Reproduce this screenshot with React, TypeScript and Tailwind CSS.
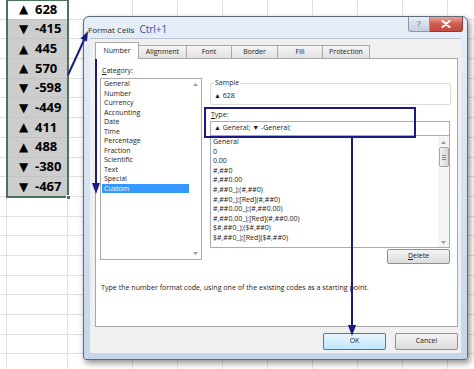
import React from 'react';

const values = [
  { up: true, v: '628' },
  { up: false, v: '-415' },
  { up: true, v: '445' },
  { up: true, v: '570' },
  { up: false, v: '-598' },
  { up: false, v: '-449' },
  { up: true, v: '411' },
  { up: true, v: '488' },
  { up: false, v: '-380' },
  { up: false, v: '-467' },
];

const cols = ['w-[7px]', 'w-[61px]', 'w-[65px]', 'w-[45px]', 'w-[45px]', 'w-[45px]', 'w-[45px]', 'w-[45px]', 'w-[45px]', 'w-[45px]', 'w-[45px]', 'w-[45px]'];

const categories = ['General', 'Number', 'Currency', 'Accounting', 'Date', 'Time', 'Percentage', 'Fraction', 'Scientific', 'Text', 'Special', 'Custom'];

const formats = [
  'General',
  '0',
  '0.00',
  '#,##0',
  '#,##0.00',
  '#,##0_);(#,##0)',
  '#,##0_);[Red](#,##0)',
  '#,##0.00_);(#,##0.00)',
  '#,##0.00_);[Red](#,##0.00)',
  '$#,##0_);($#,##0)',
  '$#,##0_);[Red]($#,##0)',
];

const tabs = [
  { label: 'Number', w: 'w-[44px]' },
  { label: 'Alignment', w: 'w-[48px]' },
  { label: 'Font', w: 'w-[45px]' },
  { label: 'Border', w: 'w-[46px]' },
  { label: 'Fill', w: 'w-[45px]' },
  { label: 'Protection', w: 'w-[47px]' },
];

const ArrowUp = () => (
  <svg width="5" height="3" viewBox="0 0 5 3">
    <polygon points="0,3 5,3 2.5,0" fill="#9a9a9a" />
  </svg>
);

const ArrowDown = () => (
  <svg width="5" height="3" viewBox="0 0 5 3">
    <polygon points="0,0 5,0 2.5,3" fill="#9a9a9a" />
  </svg>
);

const Sheet = () => (
  <div className="flex flex-col">
    {Array.from({ length: 19 }).map((_, r) => {
      const row = values[r];
      return (
        <div key={r} className="flex h-[19.7px] shrink-0">
          {cols.map((w, c) => {
            if (c === 1 && row) {
              return (
                <div
                  key={c}
                  className={`${w} shrink-0 h-full flex items-center pl-[12px] border-r border-b border-[#c4c4c4] text-[13px] font-bold text-black ${r === 0 ? 'bg-white' : 'bg-[#cdcdcd]'}`}
                >
                  <span className="inline-block w-[16px] font-['DejaVu_Sans',sans-serif] font-normal text-[12px] leading-none">
                    {row.up ? '▲' : '▼'}
                  </span>
                  <span>{row.v}</span>
                </div>
              );
            }
            return <div key={c} className={`${w} shrink-0 h-full border-r border-b border-[#e0e0e0]`} />;
          })}
        </div>
      );
    })}
  </div>
);

const Button = ({ children, def }: { children: React.ReactNode; def?: boolean }) => (
  <div
    className={`w-[63px] h-[17px] flex items-center justify-center rounded-[2px] border text-[7px] text-[#1a1a1a] bg-gradient-to-b ${
      def ? 'border-[#3c7fb1] from-[#eaf6fd] to-[#bee6fd]' : 'border-[#8e8f8f] from-[#f4f4f4] to-[#dcdcdc]'
    }`}
  >
    {children}
  </div>
);

const Dialog = () => (
  <div className="absolute left-[83px] top-[16px] w-[385px] h-[344px] rounded-t-[6px] rounded-b-[3px] border border-[#5f6b7a] bg-gradient-to-b from-[#e6eef8] to-[#c5d6ea] shadow-[2px_3px_6px_rgba(0,0,0,0.45)] flex flex-col">
    {/* title bar */}
    <div className="h-[21px] flex items-start shrink-0">
      <div className="flex items-baseline pl-[4px] pt-[5px] gap-[5px]">
        <span className="text-[8px] text-[#1e1e1e]">Format Cells</span>
        <span className="text-[10px] text-[#2b4f9e]">Ctrl+1</span>
      </div>
      <div className="ml-auto mr-[4px] flex">
        <div className="w-[22px] h-[15px] rounded-bl-[3px] border border-t-0 border-[#8a97a8] bg-gradient-to-b from-[#e9eef5] to-[#c2cfdf] flex items-center justify-center text-[9px] font-bold text-[#8b9bb0]">
          ?
        </div>
        <div className="w-[33px] h-[15px] rounded-br-[3px] border border-t-0 border-l-0 border-[#8a3a3a] bg-gradient-to-b from-[#e7a39b] via-[#cf5a4f] to-[#c44a3e] flex items-center justify-center">
          <svg width="10" height="8" viewBox="0 0 10 8">
            <path d="M1.5 1 L8.5 7 M8.5 1 L1.5 7" stroke="#ffffff" strokeWidth="2" strokeLinecap="round" />
          </svg>
        </div>
      </div>
    </div>

    {/* client area */}
    <div className="mx-[6px] w-[371px] h-[315px] bg-[#f0f0f0] border-t border-[#b8c4d2] pt-[3px] pl-[5px] flex flex-col">
      <div className="flex items-end h-[16px]">
        {tabs.map((t, i) =>
          i === 0 ? (
            <div
              key={t.label}
              className={`${t.w} h-[17px] -mb-px relative z-10 bg-white border border-b-0 border-[#a8a8a8] flex items-center justify-center text-[7px] text-[#1a1a1a]`}
            >
              {t.label}
            </div>
          ) : (
            <div
              key={t.label}
              className={`${t.w} h-[13px] bg-gradient-to-b from-[#f5f5f5] to-[#e2e2e2] border border-l-0 border-b-0 border-[#a8a8a8] flex items-center justify-center text-[7px] text-[#1a1a1a]`}
            >
              {t.label}
            </div>
          )
        )}
      </div>

      <div className="w-[363px] h-[269px] bg-white border border-[#a8a8a8] flex flex-col">
        <div className="flex">
          {/* category */}
          <div className="ml-[4px] w-[102px] flex flex-col">
            <div className="mt-[7px] h-[10px] leading-[10px] pl-[2px] text-[7px] text-[#1a1a1a]">
              <span className="underline">C</span>ategory:
            </div>
            <div className="mt-[2px] h-[182px] border border-[#ababab] flex">
              <div className="flex flex-col pl-[1px] flex-1">
                {categories.map((c) => (
                  <div
                    key={c}
                    className={`h-[9.5px] leading-[9.5px] text-[7px] pl-[2px] w-[87px] ${c === 'Custom' ? 'bg-[#3399ff] text-white' : 'text-[#1a1a1a]'}`}
                  >
                    {c}
                  </div>
                ))}
              </div>
              <div className="w-[11px] flex flex-col items-center justify-between pt-[4px] pb-[4px]">
                <ArrowUp />
                <ArrowDown />
              </div>
            </div>
          </div>

          {/* type */}
          <div className="ml-[8px] w-[241px] flex flex-col">
            <div className="mt-[24px] h-[22px] relative border border-[#dcdcdc] rounded-[2px] flex items-center pl-[3px] pt-[4px]">
              <span className="absolute -top-[6px] left-[3px] bg-white px-[1px] text-[7px] leading-[10px] text-[#1a1a1a]">Sample</span>
              <span className="text-[7px] text-[#1a1a1a]">▲ 628</span>
            </div>
            <div className="mt-[5px] h-[9px] leading-[9px] pl-[1px] text-[7px] text-[#1a1a1a]">
              <span className="underline">T</span>ype:
            </div>
            <div className="mt-[2px] h-[15px] w-[240px] border border-[#ababab] flex items-center pl-[3px] text-[7px] text-[#1a1a1a]">
              ▲ General; ▼ -General;
            </div>
            <div className="h-[112px] w-[240px] border border-t-0 border-[#ababab] flex">
              <div className="flex-1 flex flex-col pl-[2px] pt-[1px]">
                {formats.map((f) => (
                  <div key={f} className="h-[9.6px] leading-[9.6px] text-[7px] text-[#1a1a1a]">
                    {f}
                  </div>
                ))}
              </div>
              <div className="w-[11px] bg-[#f4f4f4] flex flex-col items-center pt-[5px] pb-[3px]">
                <ArrowUp />
                <div className="mt-[3px] w-[10px] h-[20px] rounded-[2px] border border-[#a5a5a5] bg-gradient-to-r from-[#f2f2f2] to-[#d8d8d8] flex flex-col items-center justify-center gap-[1px]">
                  <div className="w-[4px] h-px bg-[#8a8a8a]" />
                  <div className="w-[4px] h-px bg-[#8a8a8a]" />
                  <div className="w-[4px] h-px bg-[#8a8a8a]" />
                </div>
                <div className="mt-auto">
                  <ArrowDown />
                </div>
              </div>
            </div>
            <div className="mt-[1px] self-end mr-[1px] h-[15px]">
              <div className="w-[63px] h-[15px] flex items-center justify-center rounded-[2px] border border-[#8e8f8f] bg-gradient-to-b from-[#f4f4f4] to-[#dcdcdc] text-[7px] text-[#1a1a1a]">
                <span className="underline">D</span>elete
              </div>
            </div>
          </div>
        </div>
        <div className="mt-[18px] pl-[5px] h-[10px] leading-[10px] text-[7.1px] text-[#1a1a1a]">
          Type the number format code, using one of the existing codes as a starting point.
        </div>
      </div>

      <div className="mt-[6px] w-[363px] flex justify-end gap-[9px]">
        <Button def>OK</Button>
        <Button>Cancel</Button>
      </div>
    </div>
  </div>
);

const Annotations = () => (
  <svg className="absolute inset-0 pointer-events-none" width="474" height="369" viewBox="0 0 474 369">
    <g stroke="#1a1a86" strokeWidth="2" fill="none">
      <line x1="68" y1="75" x2="84.5" y2="39" />
      <line x1="96" y1="57" x2="96" y2="184" />
      <line x1="352" y1="137" x2="352" y2="326" />
      <rect x="205" y="108" width="210" height="29" />
    </g>
    <g fill="#1a1a86">
      <polygon points="88,31 87,41.6 80.6,38.6" />
      <polygon points="92,183 100,183 96,194" />
      <polygon points="348,325 356,325 352,336" />
    </g>
  </svg>
);

export default function App() {
  return (
    <div className="relative w-[474px] h-[369px] overflow-hidden bg-white font-['Open_Sans',sans-serif]">
      <Sheet />
      <div className="absolute left-[6px] top-[-1px] w-[63px] h-[199px] border-2 border-[#4c735a]" />
      <div className="absolute left-[66px] top-[195px] w-[5px] h-[5px] bg-[#4c735a] border border-white" />
      <Dialog />
      <Annotations />
    </div>
  );
}
